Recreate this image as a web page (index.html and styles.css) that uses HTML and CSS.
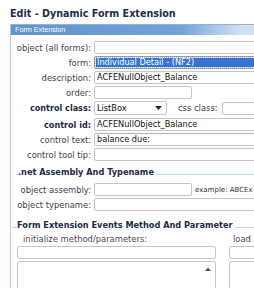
FILE: index.html
```html
<!DOCTYPE html>
<html lang="en">
  <head>
    <meta charset="UTF-8" />
    <title>Edit - Dynamic Form Extension</title>
    <link rel="stylesheet" href="styles.css">
  </head>
  <body>
    <div class="page">
      <h1 class="page-title">Edit - Dynamic Form Extension</h1>

      <div class="panel">
        <div class="panel-head">Form Extension</div>

        <div class="panel-body">
          <div class="row">
            <label>object (all forms):</label>
            <div class="field wide"></div>
          </div>
          <div class="row">
            <label>form:</label>
            <div class="field wide select-open">
              <span class="picked">Individual Detail - (NF2)</span>
            </div>
          </div>
          <div class="row">
            <label>description:</label>
            <div class="field wide">ACFENullObject_Balance</div>
          </div>
          <div class="row">
            <label>order:</label>
            <div class="field short"></div>
          </div>
          <div class="row row-select">
            <label class="strong">control class:</label>
            <div class="field dropdown">
              ListBox
              <svg class="caret" width="7" height="4" viewBox="0 0 7 4">
                <path d="M0 0H7L3.5 4Z" fill="#222" />
              </svg>
            </div>
            <span class="inline-label">css class:</span>
            <div class="field wide"></div>
          </div>
          <div class="row">
            <label class="strong">control id:</label>
            <div class="field wide">ACFENullObject_Balance</div>
          </div>
          <div class="row">
            <label>control text:</label>
            <div class="field wide active">balance due:</div>
          </div>
          <div class="row">
            <label>control tool tip:</label>
            <div class="field wide"></div>
          </div>
        </div>

        <div class="group">
          <div class="group-title"><span>.net Assembly And Typename</span></div>
          <div class="row">
            <label>object assembly:</label>
            <div class="field short"></div>
            <span class="hint">example: ABCEx</span>
          </div>
          <div class="row">
            <label>object typename:</label>
            <div class="field wide"></div>
          </div>
        </div>

        <div class="group events">
          <div class="group-title"><span>Form Extension Events Method And Parameter</span></div>
          <div class="event-cols">
            <div class="event-col">
              <div class="event-label">initialize method/parameters:</div>
              <div class="field"></div>
              <div class="area">
                <div class="scroll">
                  <svg width="6" height="4" viewBox="0 0 6 4">
                    <path d="M0 4L3 0.5L6 4Z" fill="#555" />
                  </svg>
                </div>
              </div>
            </div>
            <div class="event-col second">
              <div class="event-label">load</div>
              <div class="field"></div>
              <div class="area"></div>
            </div>
          </div>
        </div>
      </div>
    </div>
  </body>
</html>
```

FILE: styles.css
```css
body {
  margin: 0;
  background: #fff;
  font-family: "DejaVu Sans", Verdana, sans-serif;
  overflow: hidden;
}
.page {
  width: 340px;
}
.page-title {
  margin: 0;
  padding: 8px 0 0 10px;
  font-size: 9.6px;
  line-height: 12px;
  font-weight: bold;
  color: #1f2d4b;
}
.panel {
  margin: 4px 0 0 10px;
  border-left: 1px solid #b4cbe5;
  padding-bottom: 40px;
}
.panel-head {
  height: 10px;
  line-height: 10px;
  border-top: 1px solid #8fb2da;
  padding-left: 4px;
  font-family: "Liberation Sans", Arial, sans-serif;
  font-size: 7.2px;
  color: #fff;
  background: linear-gradient(100deg, #5f93cc 0%, #74a4d6 52%, #a9c8e8 62%, #cfe1f2 70%, #d3e3f3 100%);
}
.panel-body {
  padding-top: 6px;
}
.row {
  display: flex;
  align-items: center;
  height: 13px;
  margin-bottom: 2px;
}
.row label {
  width: 80px;
  margin-right: 3px;
  flex: none;
  text-align: right;
  font-size: 8.4px;
  color: #3b404b;
  white-space: nowrap;
}
.row label.strong {
  font-weight: bold;
  font-size: 8.1px;
  color: #1b2841;
}
.field {
  box-sizing: border-box;
  height: 13px;
  flex: none;
  border: 1px solid #c6c6c6;
  border-radius: 2px;
  padding: 0 2px;
  font-size: 8.2px;
  line-height: 11px;
  color: #111;
  background: #fff;
  white-space: nowrap;
  overflow: hidden;
}
.field.wide {
  width: 230px;
}
.field.short {
  width: 98px;
}
.field.active {
  border-top-color: #9db9d9;
}
.select-open {
  padding: 1px;
  border-color: #9a9a9a;
}
.picked {
  display: block;
  height: 9px;
  line-height: 9px;
  padding-left: 1px;
  color: #fff;
  background: #3673d2;
  outline: 1px dotted #9bbbe8;
}
.row-select {
  height: 14px;
  margin-bottom: 3px;
}
.dropdown {
  display: flex;
  align-items: center;
  justify-content: space-between;
  width: 73px;
  height: 14px;
  padding-right: 4px;
}
.caret {
  display: block;
}
.inline-label {
  margin: 0 4px 0 11px;
  font-size: 8.4px;
  color: #3b404b;
  white-space: nowrap;
}
.hint {
  margin-left: 3px;
  font-size: 7px;
  color: #333;
  white-space: nowrap;
}
.group {
  margin-top: 5px;
}
.group-title {
  display: flex;
  align-items: flex-end;
  height: 11px;
  margin-bottom: 6px;
  margin-left: 5px;
  font-size: 8.2px;
  font-weight: bold;
  color: #1c2b47;
  white-space: nowrap;
}
.group-title::before {
  content: "";
  width: 2px;
  height: 1px;
  margin-bottom: 2px;
  background: #c3d4e8;
}
.group-title::after {
  content: "";
  flex: 1;
  height: 1px;
  margin: 0 0 2px 2px;
  background: #c3d4e8;
}
.events {
  margin-top: 8px;
}
.events .group-title {
  margin-left: 1px;
  margin-bottom: 3px;
}
.events .group-title::before {
  width: 5px;
}
.event-cols {
  display: flex;
  gap: 13px;
  margin-left: 6px;
}
.event-col {
  width: 199px;
  flex: none;
}
.event-col.second {
  width: 100px;
}
.event-label {
  height: 12px;
  padding-left: 6px;
  font-size: 8.4px;
  line-height: 12px;
  color: #444a55;
  margin-bottom: 1px;
}
.second .event-label {
  padding-left: 4px;
}
.event-col .field {
  width: 100%;
}
.area {
  box-sizing: border-box;
  height: 40px;
  margin-top: 2px;
  border: 1px solid #c6c6c6;
  border-radius: 2px;
  display: flex;
  justify-content: flex-end;
}
.scroll {
  width: 15px;
  padding-top: 5px;
  display: flex;
  justify-content: center;
  align-items: flex-start;
}
```
